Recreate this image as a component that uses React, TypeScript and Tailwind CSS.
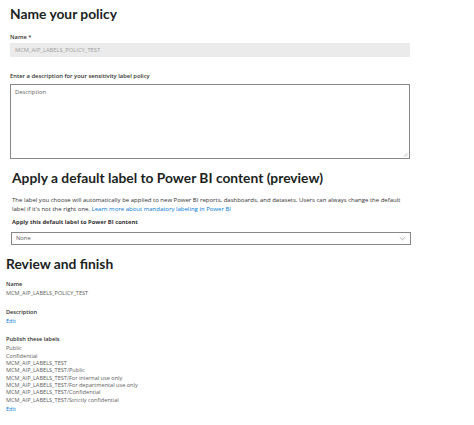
const labels = [
  "Public",
  "Confidential",
  "MCM_AIP_LABELS_TEST",
  "MCM_AIP_LABELS_TEST/Public",
  "MCM_AIP_LABELS_TEST/For internal use only",
  "MCM_AIP_LABELS_TEST/For departmental use only",
  "MCM_AIP_LABELS_TEST/Confidential",
  "MCM_AIP_LABELS_TEST/Strictly confidential",
];

const Chevron = () => (
  <svg width="7" height="5" viewBox="0 0 7 5" fill="none">
    <path d="M0.8 1.2 L3.5 3.8 L6.2 1.2" stroke="#8a8886" strokeWidth="0.7" />
  </svg>
);

const headingCls =
  "text-[13.8px] leading-[18px] font-bold text-[#201f1e] font-['Lato',_sans-serif]";

const App = () => {
  return (
    <div
      className="w-[474px] h-[425px] overflow-hidden bg-white text-[#323130]"
      style={{ fontFamily: "'Open Sans', 'Liberation Sans', sans-serif" }}
    >
      <div className="px-[10px] pt-[5px]">
        <h1 className={headingCls}>Name your policy</h1>
        <label className="block mt-[10px] text-[5.8px] leading-[8px] font-semibold">
          Name *
        </label>
        <div className="mt-[2px] w-[400px] h-[14px] bg-[#ebebeb] flex items-center px-[5px] text-[5.8px] text-[#a19f9d]">
          MCM_AIP_LABELS_POLICY_TEST
        </div>
        <label className="block mt-[15px] text-[5.8px] leading-[8px] font-semibold">
          Enter a description for your sensitivity label policy
        </label>
        <div className="relative mt-[4px] w-[400px] h-[75px] border border-[#8a8886] px-[4px] pt-[3px] text-[5.8px] text-[#605e5c]">
          Description
          <svg className="absolute right-[1px] bottom-[1px]" width="5" height="5" viewBox="0 0 5 5">
            <path d="M4.5 1 L1 4.5 M4.5 3 L3 4.5" stroke="#a19f9d" strokeWidth="0.6" />
          </svg>
        </div>
      </div>

      <div className="px-[12px]">
        <h2 className={`mt-[10px] ${headingCls}`}>
          Apply a default label to Power BI content (preview)
        </h2>
        <p className="mt-[9px] w-[396px] text-[6px] leading-[9px] text-[#323130]">
          The label you choose will automatically be applied to new Power BI reports, dashboards, and datasets. Users can always change the default label if it's not the right one.{" "}
          <span className="text-[#0078d4]">Learn more about mandatory labeling in Power BI</span>
        </p>
        <label className="block mt-[3.5px] text-[5.8px] leading-[8px] font-bold">
          Apply this default label to Power BI content
        </label>
        <div className="-ml-[1px] mt-[6px] w-[400px] h-[13px] border border-[#8a8886] flex items-center justify-between px-[4px] text-[5.8px] text-[#605e5c]">
          <span>None</span>
          <Chevron />
        </div>
      </div>

      <div className="px-[6px]">
        <h2 className={`mt-[10px] ${headingCls}`}>Review and finish</h2>
        <div className="mt-[8.5px] text-[5.6px] leading-[7.3px]">
          <div className="font-semibold">Name</div>
          <div className="mt-[2px] text-[#605e5c]">MCM_AIP_LABELS_POLICY_TEST</div>
          <div className="mt-[11px] font-semibold">Description</div>
          <div className="mt-[2px] text-[#0078d4]">Edit</div>
          <div className="mt-[11px] font-semibold">Publish these labels</div>
          <div className="mt-[2px] text-[#605e5c]">
            {labels.map((l) => (
              <div key={l}>{l}</div>
            ))}
          </div>
          <div className="mt-[2px] text-[#0078d4]">Edit</div>
        </div>
      </div>
    </div>
  );
};

export default App;
